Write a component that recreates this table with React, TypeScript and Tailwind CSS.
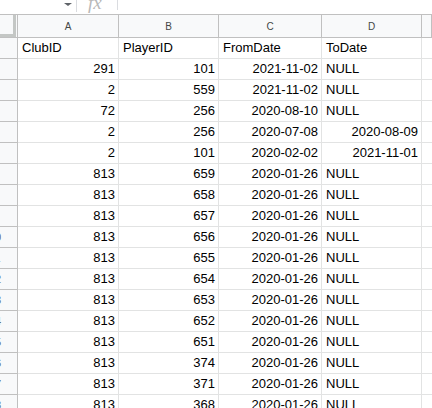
import React from "react";

type Cell = { v: string; align: "l" | "r" };

const t = (v: string): Cell => ({ v, align: "l" });
const n = (v: string | number): Cell => ({ v: String(v), align: "r" });

const data: Cell[][] = [
  [t("ClubID"), t("PlayerID"), t("FromDate"), t("ToDate")],
  [n(291), n(101), n("2021-11-02"), t("NULL")],
  [n(2), n(559), n("2021-11-02"), t("NULL")],
  [n(72), n(256), n("2020-08-10"), t("NULL")],
  [n(2), n(256), n("2020-07-08"), n("2020-08-09")],
  [n(2), n(101), n("2020-02-02"), n("2021-11-01")],
  ...[659, 658, 657, 656, 655, 654, 653, 652, 651, 374, 371, 368].map((p) => [
    n(813),
    n(p),
    n("2020-01-26"),
    t("NULL"),
  ]),
];

const cols = ["A", "B", "C", "D", ""];

export default function App() {
  return (
    <div className="w-[432px] h-[408px] overflow-hidden bg-white font-['Liberation_Sans',Arial,sans-serif] text-black">
      {/* formula bar, cut off at the top */}
      <div className="h-[14px] flex items-start overflow-hidden">
        <div className="w-[64px]" />
        <div className="mt-[3px] w-0 h-0 border-l-[4px] border-r-[4px] border-t-[3px] border-l-transparent border-r-transparent border-t-[#5f6368]" />
        <div className="ml-[4px] w-px h-[12px] bg-[#dadce0]" />
        <div className="ml-[11px] -mt-[7px] font-['Liberation_Serif',serif] italic text-[19px] leading-none text-[#b8b8b8]">
          fx
        </div>
        <div className="ml-[15px] w-px h-[10px] bg-[#dadce0]" />
      </div>

      <div className="grid grid-cols-[18px_101px_100px_103px_100px_1fr] border-t border-[#c0c0c0]">
        {/* header row */}
        <div className="h-[23px] bg-[#f8f9fa] border-r border-b border-[#c0c0c0] flex">
          <div className="w-[16px] h-[22px] border-r-[3px] border-b-[3px] border-[#c4c7c5]" />
        </div>
        {cols.map((c, i) => (
          <div
            key={i}
            className="h-[23px] bg-[#f8f9fa] border-r border-b border-[#c0c0c0] flex items-center justify-center text-[10px] text-[#444746]"
          >
            {c}
          </div>
        ))}

        {data.map((row, r) => (
          <React.Fragment key={r}>
            <div className="h-[21px] bg-[#f8f9fa] border-r border-b border-[#c0c0c0] overflow-hidden">
              <div className="w-[46px] -ml-[28px] h-full flex items-center justify-center text-[11px] text-[#5f6368]">
                {r + 1}
              </div>
            </div>
            {row.map((c, i) => (
              <div
                key={i}
                className={`h-[21px] border-r border-b border-[#e2e3e3] flex items-center text-[13px] whitespace-nowrap overflow-hidden ${
                  c.align === "r" ? "justify-end pr-[3px]" : "justify-start pl-[4px]"
                }`}
              >
                {c.v}
              </div>
            ))}
            <div className="h-[21px] border-b border-[#e2e3e3]" />
          </React.Fragment>
        ))}
      </div>
    </div>
  );
}
